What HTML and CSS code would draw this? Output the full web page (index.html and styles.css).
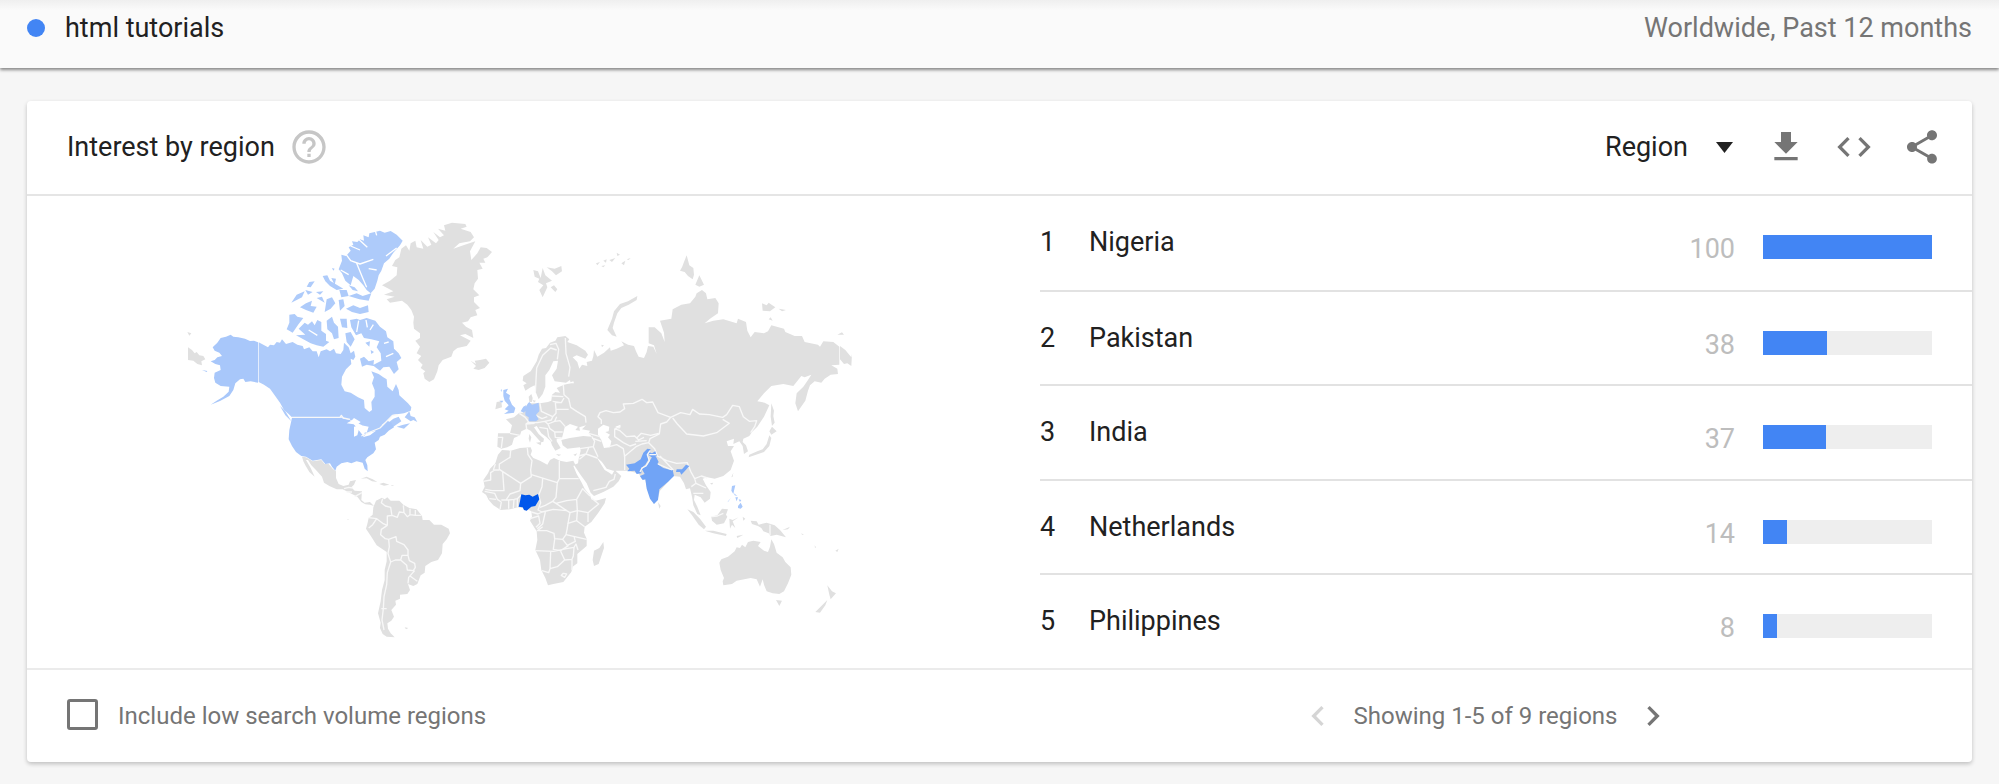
FILE: index.html
```html
<!DOCTYPE html>
<html lang="en">
<head>
<meta charset="utf-8">
<title>html tutorials - Interest by region</title>
<link rel="stylesheet" href="styles.css">
</head>
<body>
<header class="topbar">
  <span class="dot"></span>
  <h1 class="term">html tutorials</h1>
  <span class="scope">Worldwide, Past 12 months</span>
</header>
<main class="card">
  <div class="card-head">
    <h2 class="card-title">Interest by region</h2>
    <button class="icon-button help" type="button" aria-label="Help">
      <svg class="icon" viewBox="0 0 24 24"><path d="M11 18h2v-2h-2v2zm1-16C6.480 2 2 6.480 2 12s4.480 10 10 10 10-4.480 10-10S17.520 2 12 2zm0 18c-4.410 0-8-3.590-8-8s3.590-8 8-8 8 3.590 8 8-3.590 8-8 8zm0-14c-2.210 0-4 1.790-4 4h2c0-1.100.9-2 2-2s2 .9 2 2c0 2-3 1.750-3 5h2c0-2.250 3-2.500 3-5 0-2.210-1.790-4-4-4z"/></svg>
    </button>
    <div class="picker">
      <select class="picker-select" aria-label="Resolution">
        <option>Region</option>
        <option>City</option>
      </select>
      <svg class="caret" viewBox="0 0 17 11"><path d="M0 0h17L8.500 11z"/></svg>
    </div>
    <div class="actions">
      <button class="icon-button" type="button" aria-label="Download">
        <svg class="icon" viewBox="0 0 24 24"><path d="M19 9h-4V3H9v6H5l7 7 7-7zM5 18v2h14v-2H5z"/></svg>
      </button>
      <button class="icon-button" type="button" aria-label="Embed">
        <svg class="icon" viewBox="0 0 24 24"><path d="M9.400 16.600L4.800 12l4.600-4.600L8 6l-6 6 6 6 1.400-1.400zm5.200 0l4.600-4.600-4.600-4.600L16 6l6 6-6 6-1.400-1.400z"/></svg>
      </button>
      <button class="icon-button" type="button" aria-label="Share">
        <svg class="icon" viewBox="0 0 24 24"><path d="M18 16.080c-.76 0-1.440.3-1.960.77L8.910 12.700c.05-.23.090-.46.090-.7s-.04-.47-.09-.7l7.050-4.110c.54.5 1.250.81 2.040.81 1.660 0 3-1.340 3-3s-1.340-3-3-3-3 1.340-3 3c0 .24.040.47.090.7L8.040 9.810C7.500 9.310 6.790 9 6 9c-1.660 0-3 1.340-3 3s1.340 3 3 3c.79 0 1.500-.31 2.040-.81l7.120 4.160c-.05.21-.08.43-.08.65 0 1.610 1.310 2.920 2.920 2.920s2.920-1.310 2.920-2.920-1.310-2.920-2.920-2.920z"/></svg>
      </button>
    </div>
  </div>

  <div class="card-body">
    <div class="map-pane">
      <svg class="map" viewBox="182 214 680 436" role="img" aria-label="World map of interest by region">
        <!-- North American Arctic and Canada -->
        <g transform="translate(180 210) scale(.33333)">
          <path class="land" d="M24 412L36 420 44 430 50 426 58 436 70 438 76 448 64 454 66 466 52 462 40 452 24 450ZM22 366L34 370 28 377Z"/>
          <path class="usa" d="M234 397L222 392 210 393 195 386 175 382 160 380 152 374 138 380 122 384 112 398 98 412 104 422 118 428 126 438 112 442 104 450 92 454 106 462 120 466 122 480 104 488 102 504 106 518 122 528 148 530 146 545 130 560 110 572 92 584 120 573 148 558 160 540 166 520 180 508 190 506 196 516 212 514 234 518ZM66 480L82 483 80 486Z"/>
          <path class="canada" d="M236 397L250 404 264 412 270 404 282 406 290 396 300 398 306 388 318 402 338 396 352 404 368 408 372 418 388 412 398 424 410 424 416 442 422 424 440 418 450 424 462 416 468 430 482 432 490 420 492 398 506 412 512 430 522 422 526 440 520 450 512 446 514 462 498 478 486 500 484 524 494 544 512 548 534 562 552 570 554 594 568 606 576 600 574 576 584 560 584 540 576 520 582 502 574 484 596 492 610 502 620 508 622 530 638 544 648 522 656 540 658 556 684 580 694 592 692 602 672 610 640 614 620 634 604 646 620 642 640 626 656 620 664 634 640 650 600 660 572 668 550 682 556 662 545 645 512 630 486 622 336 622 326 612 312 600 300 578 284 556 270 536 252 524 236 516Z"/>
          <path class="canada" d="M674 622L688 604 692 618 704 622 712 636 700 630 692 634ZM300 588L316 604 334 634 316 616ZM650 650L670 644 690 640 672 656Z"/>
          <path class="canada" d="M568 70L584 66 600 62 614 68 632 63 650 74 668 92 660 106 640 128 628 146 612 160 604 182 596 196 592 212 584 236 572 250 560 240 550 226 536 210 520 198 512 226 496 212 486 190 476 178 486 152 484 134 498 138 512 122 506 112 520 104 516 94 532 96 540 88 552 92 550 76 566 82Z"/>
          <path class="fjord" d="M496 130L512 152 540 162 580 148M530 160L548 204 560 232M618 138L650 114M536 88L562 112M512 108L540 120M590 180L566 176M482 180L506 194M586 62L590 76"/>
          <path class="canada" d="M506 258L530 250 548 258 574 250 566 272 538 268ZM498 296L520 286 540 294 564 286 566 306 540 312 516 306ZM334 278L350 254 374 244 366 262ZM388 216L404 214 392 232 380 230ZM360 292L378 280 396 272 392 288 410 290 400 308 378 300ZM410 264L426 260 434 278ZM428 198L442 196 450 212 470 224 490 236 470 240 450 228 436 214ZM454 204L468 206 464 224ZM440 268L456 262 466 280 452 296 434 306ZM476 270L490 268 494 288 480 302ZM478 240L500 240 506 258 484 262ZM506 226L524 232 534 244 518 240ZM376 240L398 246 384 254ZM408 246L430 244 420 254ZM456 174L464 176 460 182Z"/>
          <path class="canada" d="M328 314L344 312 352 320 370 324 356 342 338 368 320 358 328 338ZM356 356L374 338 384 344 396 334 404 346 412 330 424 336 424 362 438 372 438 392 448 396 430 410 410 406 392 400 348 376 376 374ZM440 332L456 320 462 338 474 350 476 384 462 388 456 370 442 358ZM480 326L500 326 502 354 486 352ZM496 370L512 366 524 388 512 410 500 396ZM510 330L530 326 540 330 560 324 586 332 600 350 618 364 622 382 640 394 642 416 656 430 664 444 650 456 656 478 642 492 628 470 610 472 600 482 578 466 604 452 602 430 590 412 598 394 574 388 552 384 544 370 528 376 514 352ZM540 446L552 440 566 454 582 450 580 468 560 464 546 470ZM556 398L570 394 568 410ZM572 420L582 426 574 432Z"/>
          <path class="fjord" d="M536 332L530 366M558 330L562 352M386 360L412 376M580 344L570 360M612 400L626 396M618 440L640 430"/>
        </g>
        <!-- United States, Mexico, South America -->
        <g transform="translate(270 400) scale(.33333)">
          <path class="usa" d="M66 53L212 53 240 60 256 78 282 110 300 98 326 86 352 62 364 68 372 82 356 92 344 104 330 110 326 120 314 128 318 148 310 160 292 172 286 180 292 196 293 214 284 206 278 188 260 184 244 190 232 186 214 190 200 200 196 212 186 200 180 190 166 192 154 178 128 182 108 170 94 168 78 156 66 138 56 118 58 90Z"/>
          <path class="water" d="M230 70L244 62 252 54 272 66 262 74 246 72ZM252 80L270 76 262 106 252 110ZM274 76L296 80 290 98 280 96ZM278 112L292 98 318 92 300 106Z"/>
          <path class="line" d="M66 52L210 52 214 46 220 54 240 58M274 108L300 96 330 84 368 46 384 44"/>
          <path class="land" d="M96 170L108 172 128 184 154 180 164 192 176 192 188 206 198 214 198 234 206 252 220 258 236 254 240 244 258 240 252 254 244 262 254 272 276 274 274 300 284 308 300 306 312 318 300 314 286 313 274 306 262 290 246 282 230 274 218 268 200 268 178 258 162 248 156 230 138 210 124 196 114 180 108 180 122 204 134 230 118 216 106 196 100 184Z"/>
          <path class="line" d="M222 266L236 262 248 264M230 276L246 276M254 290L276 278"/>
          <path class="land" d="M272 236L290 230 308 238 322 246 306 244 290 235ZM328 252L340 248 358 254 342 257ZM364 255L373 257 365 258ZM232 357L236 358 234 361ZM404 682L415 684 408 688Z"/>
          <path class="land" d="M310 322L318 302 336 293 344 298 352 292 362 302 388 302 400 314 418 324 440 328 456 348 458 360 478 360 492 374 514 374 536 386 540 400 530 418 518 432 516 460 504 480 484 486 466 498 464 518 452 526 442 552 430 558 414 552 420 570 412 582 390 584 390 596 376 602 378 614 364 630 372 650 364 662 352 670 354 686 362 700 374 712 350 710 338 702 330 684 332 668 324 640 332 604 336 570 344 540 344 510 350 484 350 456 320 436 304 410 288 386 292 372 296 354 308 344Z"/>
          <path class="line" d="M338 296L334 308 346 318 362 322 366 348M296 353L320 356 308 374 296 384M320 356L338 370 352 376 352 348 366 346 382 352 388 336 402 338 400 316M352 376L334 388 332 404 346 416 356 418 378 410 380 424 402 434 414 450 414 466 396 466 392 480 376 480 362 486 354 460 358 440 356 418M414 466L418 482 434 490 436 502 430 512 412 510 410 496 392 480M434 512L416 532 414 550M420 528L442 544M362 486L352 518 350 554 342 590 340 626 336 660 342 690M334 626L350 626M402 338L412 350 420 344 420 326M420 344L436 346 436 330M436 346L454 346"/>
        </g>
        <!-- Greenland, Iceland, Svalbard -->
        <g transform="translate(370 210) scale(.33333)">
          <path class="land" d="M66 168L76 150 88 142 94 116 108 106 118 122 122 100 136 92 140 112 160 116 152 90 172 110 184 104 174 82 198 100 206 90 190 66 210 82 222 76 204 56 226 62 222 46 246 38 286 42 290 50 272 56 302 66 312 82 300 94 268 100 250 116 280 106 316 94 300 124 304 150 322 130 332 112 350 114 366 126 352 142 340 146 346 158 328 158 338 176 322 180 324 206 314 220 310 238 328 256 312 262 312 276 330 294 316 300 322 316 302 322 294 334 276 338 288 350 306 360 310 384 286 372 270 376 302 392 290 408 262 414 250 424 244 440 218 450 206 466 202 484 192 508 178 516 164 506 160 490 166 484 152 474 158 464 144 450 154 438 140 430 150 410 136 392 150 384 150 370 132 356 130 338 132 320 124 300 112 284 96 272 60 278 50 268 74 260 42 254 70 244 36 226 60 212 80 196 82 172Z"/>
          <path class="land" d="M302 452L318 462 314 452 330 450 348 446 358 458 344 474 326 480 310 476 318 468ZM490 180L504 184 512 204 518 174 526 196 546 212 528 220 532 232 518 262 508 240 520 226 504 216 508 206 494 200ZM530 172L554 176 574 168 576 184 558 196 546 184ZM542 232L552 226 562 238 556 246Z"/>
        </g>
        <!-- Europe and Asia -->
        <g transform="translate(460 240) scale(.33333)">
          <path class="land" d="M196 452L190 436 200 430 188 422 190 408 212 394 230 364 236 344 246 326 258 324 270 308 286 302 292 292 316 288 328 298 322 306 350 316 376 332 384 344 376 356 350 346 338 352 352 366 358 386 366 374 382 378 380 366 396 362 400 348 402 330 412 350 432 338 450 322 452 332 470 326 492 316 484 304 504 314 522 318 528 334 536 350 552 354 560 336 564 318 580 320 590 342 582 316 566 310 566 262 584 262 604 280 614 306 612 278 600 242 634 236 638 208 664 194 690 190 706 170 710 160 726 150 738 160 742 178 766 174 776 190 774 220 750 236 734 250 760 242 790 238 830 250 834 236 858 246 862 272 872 292 884 276 912 280 924 274 934 256 972 266 976 276 1004 288 1026 288 1034 306 1074 314 1080 320 1090 304 1120 306 1138 320 1138 374 1114 376 1132 386 1134 402 1112 404 1094 416 1084 428 1064 424 1050 436 1044 452 1036 482 1014 514 1006 490 1010 460 1030 440 1044 420 1054 404 1034 412 1024 408 1000 438 970 432 934 438 912 460 892 484 914 488 928 496 912 530 892 560 876 576 868 588 850 596 848 606 858 616 864 634 852 642 848 618 838 604 820 612 822 596 800 604 804 618 822 618 812 634 822 662 812 690 790 708 764 716 742 712 728 716 738 736 752 756 750 776 734 788 722 772 704 764 702 780 712 800 722 826 712 822 700 796 696 770 690 745 678 748 672 730 660 710 638 708 626 724 600 752 592 780 582 792 570 772 560 740 556 720 544 716 536 700 500 692 480 692 460 692 440 686 426 666 410 652 424 674 434 690 448 698 456 704 464 690 484 708 476 724 460 740 430 756 402 768 392 758 380 730 362 705 342 675 354 670 356 656 362 632 360 622 340 624 322 626 308 616 304 600 330 594 370 588 396 590 386 580 390 572 366 568 378 556 358 562 360 572 346 570 354 560 330 552 314 562 310 578 306 594 290 596 290 604 302 624 286 632 276 616 272 604 258 590 244 580 230 558 222 562 236 582 252 596 250 606 242 606 226 588 212 572 200 566 184 574 180 586 162 594 156 614 142 622 124 626 112 620 114 580 150 580 156 556 138 538 162 532 178 518 190 518 196 500 206 490 220 490 240 490 264 486 274 482 276 464 286 456 300 458 290 444 312 434 332 430 330 420 318 428 284 424 276 406 290 386 294 362 280 364 268 390 256 406 256 440 248 462 236 478 228 458 224 436 212 442Z"/>
          <path class="water" d="M414 566L430 554 448 560 446 574 436 576 450 584 444 592 454 604 450 622 432 624 424 600 414 584ZM466 560L482 554 478 566ZM322 430L340 424 342 430Z"/>
          <path class="land" d="M106 508L110 486 124 484 126 502ZM206 470L214 462 218 474 216 486 208 486ZM218 480L228 482 222 488ZM208 582L214 592 210 608 206 596ZM228 608L244 606 242 616ZM288 642L304 644 296 648ZM340 644L352 640 346 648ZM442 270L456 236 462 214 480 192 504 184 532 168 530 180 506 194 484 204 472 220 462 248 458 264 470 290 456 286ZM666 82L672 66 680 46 688 76 700 84 702 104 698 118 684 108 674 96 660 92ZM706 134L718 106 732 134 718 140ZM906 190L920 196 926 188 946 202 930 214 908 212ZM956 206L978 210 966 214ZM926 238L932 232 938 242ZM1132 284L1146 277 1152 284ZM1140 318L1156 330 1174 352 1176 342 1174 378 1162 370 1152 372 1140 358ZM408 70L420 66 412 76ZM430 62L440 58 438 68ZM448 60L466 54 456 66ZM470 38L480 44 472 48ZM484 70L496 62 492 76ZM500 58L512 54 506 60ZM424 78L436 76 430 82ZM424 314L432 316 426 322ZM934 490L942 512 940 528 944 548 936 558 932 530ZM928 574L936 560 950 574 934 584ZM928 586L934 594 928 618 912 636 888 644 866 652 868 644 892 634 908 628 920 612ZM594 786L602 798 598 806Z"/>
          <path class="line" d="M226 458L228 420 230 384 248 346 272 324 290 330M292 358L296 328 288 310 270 314M316 294L318 340 330 382 326 410M310 434L312 464 326 476 332 502 350 514 376 530 378 548M276 468L310 470M278 484L304 488 312 474M240 490L244 514 278 530 288 520 288 508 326 508M288 508L286 488 302 488M278 530L274 540 254 544 232 548 204 548M228 526L246 536 262 530M254 544L264 552 284 544 300 542 316 560M264 552L270 566 284 576 308 576M238 562L262 566 266 590 276 604M284 576L286 592 306 594M178 520L196 532 206 546 198 552 200 568M150 580L180 586M114 592L128 592 124 624M198 552L224 550M290 530L284 544"/>
          <path class="line" d="M424 552L424 540 414 530 420 518 438 512 460 518 480 516 494 506 490 492 520 490 546 478 560 488 578 486 594 518 632 532 662 518 690 524 698 508 718 522 748 524 788 532 800 524 818 496 838 500 850 530 868 544 890 542 884 560 872 578M638 534L652 552 680 582 730 588 770 578 808 550 788 538M632 532L620 546 602 552 598 582 570 596 566 608 584 626 592 648 620 662 650 670 682 668 692 694 704 716 724 708 742 714M448 620L470 614 490 626 494 650 494 690M492 650L528 620 546 612 566 608M464 566L464 590 490 608 510 618 528 612M464 566L480 572 500 590 524 588 536 600 552 592M482 560L464 566M530 594L544 580 572 586 596 580M526 604L560 602M396 590L404 604 400 620 360 626M400 620L414 650M386 624L378 642 356 648M378 642L412 654M358 658L378 642M386 580L420 590M396 594L424 604M400 752L438 742 448 724 462 718 466 702M704 716L708 730 738 744M694 740L708 730M700 760L730 760M600 648L640 690"/>
          <path class="uk" d="M130 450L144 446 138 458 150 466 148 476 156 494 166 504 162 518 132 522 146 512 134 508 146 496 134 482 130 468ZM118 482L130 482 126 488ZM122 450L126 448 124 456Z"/>
          <path class="europe" d="M196 504L204 490 208 486 216 494 236 488 238 510 238 514 228 524 236 538 228 544 206 544 206 532 196 526ZM182 514L190 500 198 496 196 512 192 518Z"/>
        </g>
        <!-- Africa -->
        <g transform="translate(460 420) scale(.33333)">
          <path class="land" d="M126 90L152 92 180 84 212 82 216 92 212 104 220 114 240 122 262 134 270 120 282 114 300 122 320 126 340 122 346 134 340 138 350 162 364 186 374 206 390 226 394 238 408 242 438 234 434 250 414 280 394 306 374 320 372 338 380 356 380 378 352 402 352 430 338 440 334 456 310 486 280 492 264 496 256 474 244 450 240 420 226 390 232 360 230 334 210 302 216 290 214 274 200 266 174 262 150 268 122 270 100 256 86 240 78 224 66 216 74 200 70 180 84 160 90 146 106 130 114 104ZM430 366L432 384 416 432 402 438 398 420 402 392 418 384Z"/>
          <path class="line" d="M152 92L150 112 118 132 118 148 182 190 214 170 212 150 216 122 204 104 202 84M118 150L104 150 92 158 92 180 70 184M128 156L132 212 96 212 76 208M106 132L100 150M298 122L298 176 292 188 214 164M298 176L356 176M248 176L246 200 236 226M182 190L180 212 150 222 138 240M292 188L288 232 278 244 288 250 320 242 350 238 368 206 390 228M288 250L320 272 330 278 352 272 350 240M352 272L384 278 416 252 394 234M384 278L384 306M236 226L242 248 234 270 246 276M240 262L256 256 278 244M246 276L280 268 320 272M352 274L350 302 374 320M330 278L324 310 350 302M256 276L248 312 232 326M248 320L232 332 260 332 282 340 284 356 308 358 318 344 322 324 324 310M318 344L344 350 380 358M308 358L322 376 346 364 342 350M284 358L280 388 302 392 326 376M226 392L280 394 320 386 342 382 340 408 336 418 314 420 302 394M272 396L270 446 266 458 246 452M270 446L292 440 314 420M336 418L336 450M342 382L348 372 354 390M310 460L320 462 314 472 304 466ZM214 276L234 282 246 276M210 296L236 288 240 310 228 322M74 214L104 220 112 238 124 246M88 236L108 238M124 246L120 268M124 240L146 240 146 266M146 240L162 238 160 264M162 238L172 236 172 262M172 236L184 224"/>
          <path class="nigeria" d="M184 223L196 226 208 224 218 230 234 222 238 238 226 258 214 260 200 272 192 270 188 262 176 260 180 244Z"/>
        </g>
        <!-- South Asia, South-East Asia, Oceania -->
        <g transform="translate(600 420) scale(.33333)">
          <path class="asia" d="M156 112L168 110 176 126 172 132 190 144 212 150 218 150 222 168 206 184 178 208 174 240 162 252 150 236 140 206 136 178 128 180 120 168 134 162 126 148 142 134ZM78 134L104 130 122 118 130 98 142 86 152 88 144 102 146 118 136 134 124 144 124 160 110 162 104 152 82 154 88 146ZM146 96L156 100 166 94 170 108 158 114 146 106ZM230 148L246 148 258 134 268 138 254 154 244 164 240 156 228 156Z"/>
          <path class="line" d="M120 156L126 144 138 138 148 122 142 104 150 92M148 104L168 104M174 132L216 150"/>
          <path class="land" d="M262 268L280 276 300 296 318 320 312 328 296 314 276 286ZM314 332L340 332 380 342 378 348 340 340ZM334 290L352 286 366 266 384 268 378 284 382 290 372 310 350 314 336 302ZM388 296L398 300 416 292 398 304 406 324 396 314 390 326ZM428 290L436 296 430 302ZM452 302L470 304 476 314 500 308 524 316 540 330 558 352 530 344 512 348 506 340 490 334 484 324 474 318 456 312ZM548 330L570 320 564 328ZM410 348L430 344 412 354ZM330 190L340 188 336 194ZM394 172L400 158 398 170ZM604 340L612 344 606 344ZM644 376L648 382 645 384ZM706 392L716 386 712 396ZM358 428L364 418 384 410 404 394 410 382 420 384 426 374 436 382 444 366 460 362 482 366 474 378 492 392 504 396 510 380 514 358 522 372 530 398 548 412 556 426 572 442 574 464 564 490 552 514 538 522 518 520 500 514 492 494 488 478 480 500 470 478 452 474 410 482 396 492 370 496 368 484 372 474 362 450ZM528 540L546 542 538 558ZM682 496L696 514 708 520 692 538 688 524ZM682 540L676 556 660 578 646 576 664 558Z"/>
          <path class="line" d="M336 290L352 288 370 280M510 314L510 346"/>
          <path class="uk" d="M396 198L406 196 402 212 400 222 394 212ZM402 220L412 228 404 226ZM406 232L414 232 410 244ZM414 258L422 248 428 260 422 266 414 264ZM382 247L392 234 386 244ZM416 238L424 240 420 246Z"/>
        </g>
      </svg>
    </div>

    <table class="ranks">
      <tbody>
        <tr class="row"><td class="rank">1</td><th class="name" scope="row">Nigeria</th><td class="value">100</td><td class="meter"><div class="track"><div class="fill" style="width:100%"></div></div></td></tr>
        <tr class="row"><td class="rank">2</td><th class="name" scope="row">Pakistan</th><td class="value">38</td><td class="meter"><div class="track"><div class="fill" style="width:38%"></div></div></td></tr>
        <tr class="row"><td class="rank">3</td><th class="name" scope="row">India</th><td class="value">37</td><td class="meter"><div class="track"><div class="fill" style="width:37%"></div></div></td></tr>
        <tr class="row"><td class="rank">4</td><th class="name" scope="row">Netherlands</th><td class="value">14</td><td class="meter"><div class="track"><div class="fill" style="width:14%"></div></div></td></tr>
        <tr class="row"><td class="rank">5</td><th class="name" scope="row">Philippines</th><td class="value">8</td><td class="meter"><div class="track"><div class="fill" style="width:8%"></div></div></td></tr>
      </tbody>
    </table>
  </div>

  <div class="card-foot">
    <label class="low-volume"><input class="check" type="checkbox">Include low search volume regions</label>
    <nav class="pager" aria-label="Pages">
      <button class="icon-button page-button" type="button" aria-label="Previous" disabled>
        <svg class="chevron" viewBox="0 0 24 24"><path d="M15.410 7.410L14 6l-6 6 6 6 1.410-1.410L10.830 12z"/></svg>
      </button>
      <span class="page-text">Showing 1-5 of 9 regions</span>
      <button class="icon-button page-button" type="button" aria-label="Next">
        <svg class="chevron" viewBox="0 0 24 24"><path d="M10 6L8.590 7.410 13.170 12l-4.580 4.590L10 18l6-6z"/></svg>
      </button>
    </nav>
  </div>
</main>
</body>
</html>
```

FILE: styles.css
```css
* {
  box-sizing: border-box;
}

body {
  margin: 0;
  background: #f6f6f6;
  color: #212121;
  font-family: Roboto, "Liberation Sans", sans-serif;
  font-size: 27px;
  line-height: 32px;
}

.topbar {
  display: flex;
  align-items: center;
  padding: 12px 27px 24px;
  background: linear-gradient(#efefef, #fafafa 10px);
  box-shadow: 0 2px 3px rgba(0, 0, 0, .45);
}

.dot {
  width: 18px;
  height: 18px;
  border-radius: 50%;
  background: #4285f4;
}

.term,
.card-title {
  margin: 0;
  font-size: 27px;
  font-weight: 400;
}

.term {
  margin-left: 20px;
}

.scope {
  margin-left: auto;
  color: #757575;
}

.card {
  margin: 33px 27px 21px;
  border-radius: 4px;
  background: #fff;
  box-shadow: 0 2px 4px rgba(0, 0, 0, .22);
}

.card-head {
  display: flex;
  align-items: center;
  min-height: 95px;
  padding: 0 30px 2px 40px;
  border-bottom: 2px solid #e5e5e5;
}

.icon-button {
  display: flex;
  padding: 0;
  border: 0;
  background: none;
  color: #757575;
  cursor: pointer;
}

.icon {
  width: 40px;
  height: 40px;
  fill: currentColor;
}

.help {
  margin-left: 14px;
  color: #c6c6c6;
}

.picker {
  position: relative;
  width: 128px;
  margin-left: auto;
}

.picker-select {
  appearance: none;
  display: block;
  width: 100%;
  padding: 0;
  border: 0;
  background: none;
  color: inherit;
  font: inherit;
}

.caret {
  position: absolute;
  top: 11px;
  right: 0;
  width: 17px;
  height: 11px;
  fill: #212121;
  pointer-events: none;
}

.actions {
  display: flex;
  gap: 28px;
  margin-left: 33px;
}

.card-body {
  display: grid;
  grid-template-columns: 990fr 955fr;
}

.map-pane {
  display: flex;
  align-items: center;
  justify-content: center;
  min-width: 0;
}

.map {
  width: 680px;
  max-width: 100%;
}

.land {
  fill: #e0e0e0;
}

.canada {
  fill: #aecbfa;
}

.usa {
  fill: #a8c7fa;
}

.uk,
.europe {
  fill: #a9c8fb;
}

.nigeria {
  fill: #0057eb;
}

.asia {
  fill: #71a4f6;
}

.water {
  fill: #fff;
}

.line,
.fjord {
  fill: none;
  stroke: #f8f8f8;
  stroke-width: 4px;
  stroke-linejoin: round;
}

.fjord {
  stroke: #fff;
}

.ranks {
  width: calc(100% - 23px);
  margin-left: 23px;
  border-collapse: collapse;
}

.row {
  height: 94px;
  border-bottom: 2px solid #e2e2e2;
}

.row:nth-child(odd) {
  height: 95px;
}

.row:last-child {
  height: 94px;
  border-bottom: 0;
}

.rank,
.name,
.value,
.meter {
  padding: 30px 0 0;
  font-weight: 400;
  text-align: left;
  vertical-align: top;
}

.rank {
  width: 49px;
}

.value {
  padding-top: 37px;
  color: #bdbdbd;
  text-align: right;
}

.meter {
  width: 237px;
  padding: 39px 40px 0 28px;
}

.track {
  height: 24px;
  background: #eee;
}

.fill {
  height: 100%;
  background: #4285f4;
}

.card-foot {
  display: grid;
  grid-template-columns: 990fr 955fr;
  align-items: center;
  min-height: 94px;
  border-top: 2px solid #ebebeb;
  color: #757575;
  font-size: 24px;
}

.low-volume {
  display: flex;
  align-items: center;
  gap: 20px;
  padding-left: 40px;
}

.check {
  appearance: none;
  width: 31px;
  height: 31px;
  margin: 0 0 4px;
  border: 3px solid #757575;
  border-radius: 3px;
}

.pager {
  display: flex;
  align-items: center;
  justify-content: center;
  gap: 16px;
  padding-right: 18px;
}

.chevron {
  width: 40px;
  height: 40px;
  fill: currentColor;
}

.page-button:disabled {
  color: #d5d5d5;
}
```
